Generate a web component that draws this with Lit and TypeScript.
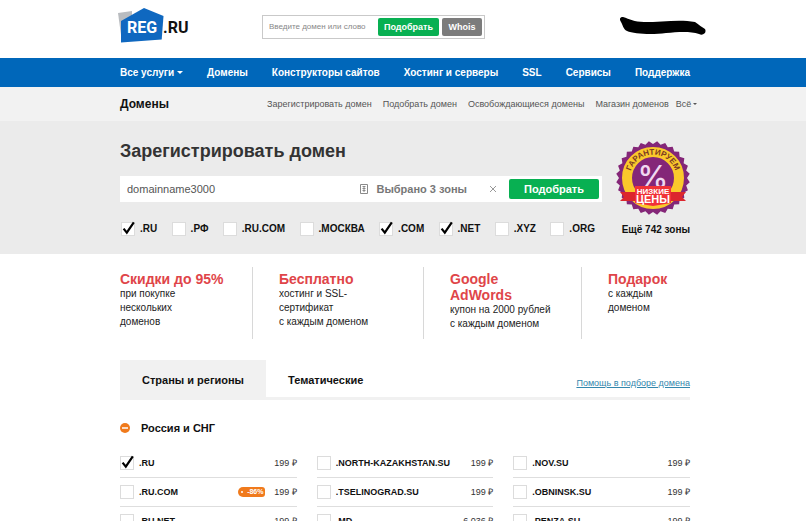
import { LitElement, html, css, svg, nothing } from "lit";
import { customElement, property } from "lit/decorators.js";

interface Zone {
  name: string;
  price?: string;
  sale?: string;
  checked?: boolean;
}

const MENU = ["Домены", "Конструкторы сайтов", "Хостинг и серверы", "SSL", "Сервисы", "Поддержка"];
const SUBMENU = ["Зарегистрировать домен", "Подобрать домен", "Освобождающиеся домены", "Магазин доменов"];
const QUICK: Zone[] = [
  { name: ".RU", checked: true },
  { name: ".РФ" },
  { name: ".RU.COM" },
  { name: ".МОСКВА" },
  { name: ".COM", checked: true },
  { name: ".NET", checked: true },
  { name: ".XYZ" },
  { name: ".ORG" },
];
const FEATURES = [
  { title: ["Скидки до 95%"], text: ["при покупке", "нескольких", "доменов"] },
  { title: ["Бесплатно"], text: ["хостинг и SSL-", "сертификат", "с каждым доменом"] },
  { title: ["Google", "AdWords"], text: ["купон на 2000 рублей", "с каждым доменом"] },
  { title: ["Подарок"], text: ["с каждым", "доменом"] },
];
const ZONES: Zone[] = [
  { name: ".RU", price: "199 ₽", checked: true },
  { name: ".NORTH-KAZAKHSTAN.SU", price: "199 ₽" },
  { name: ".NOV.SU", price: "199 ₽" },
  { name: ".RU.COM", price: "199 ₽", sale: "-86%" },
  { name: ".TSELINOGRAD.SU", price: "199 ₽" },
  { name: ".OBNINSK.SU", price: "199 ₽" },
  { name: ".RU.NET", price: "199 ₽" },
  { name: ".MD", price: "6 036 ₽" },
  { name: ".PENZA.SU", price: "199 ₽" },
];

const lines = (parts: string[]) => parts.map((p, i) => (i ? html`<br />${p}` : p));

@customElement("zone-check")
class ZoneCheck extends LitElement {
  @property() label = "";
  @property({ type: Boolean }) checked = false;

  static styles = css`
    :host { display: block; }
    .zone { display: flex; align-items: center; gap: 5px; font-weight: bold; color: #111; white-space: nowrap; }
    .box { display: grid; width: 14px; height: 14px; }
    .input { grid-area: 1 / 1; appearance: none; box-sizing: border-box; width: 14px; height: 14px; margin: 0; background: #fff; border: 1px solid #dcdcdc; }
    .tick { grid-area: 1 / 1; width: 14px; height: 14px; overflow: visible; pointer-events: none; visibility: hidden; }
    .input:checked + .tick { visibility: visible; }
  `;

  render() {
    return html`<label class="zone">
      <span class="box">
        <input class="input" type="checkbox" .checked=${this.checked} />
        <svg class="tick" viewBox="0 0 14 14" aria-hidden="true">
          <path d="M2.6 6.6 5.8 10.6 12.8.4" fill="none" stroke="#000" stroke-width="2.2" />
        </svg>
      </span>
      <span>${this.label}</span>
    </label>`;
  }
}

@customElement("price-seal")
class PriceSeal extends LitElement {
  static styles = css`
    :host { display: block; }
    .seal { display: block; width: 74px; height: 74px; }
    .arc { font: bold 8px "Liberation Sans", Arial, sans-serif; fill: #7a3a22; }
    .percent { font: 500 31px Inter, sans-serif; fill: #f0d8f0; }
    .small { font: bold 8px "Liberation Sans", Arial, sans-serif; fill: #fff; }
    .big { font: bold 11px "Liberation Sans", Arial, sans-serif; fill: #fff; }
  `;

  render() {
    const teeth = 28;
    const at = (r: number, a: number) => `${(37 + r * Math.sin(a)).toFixed(2)} ${(37 - r * Math.cos(a)).toFixed(2)}`;
    let edge = `M${at(34, 0)}`;
    for (let i = 0; i < teeth; i++) {
      const step = (2 * Math.PI) / teeth;
      edge += `L${at(37, (i + 0.5) * step)} ${at(34, (i + 1) * step)}`;
    }
    return html`<svg class="seal" viewBox="0 0 74 74" role="img" aria-label="Гарантируем низкие цены">
      <path d=${edge + "Z"} fill="#842678" />
      <circle cx="37" cy="37" r="26" fill="none" stroke="#fac92c" stroke-width="10" />
      ${svg`<path id="arc" d="M14.8 44 A23.3 23.3 0 1 1 59.2 44" fill="none" />
      <text class="arc" text-anchor="middle"><textPath href="#arc" startOffset="50%">ГАРАНТИРУЕМ</textPath></text>`}
      <text class="percent" x="37" y="47" text-anchor="middle">%</text>
      <path d="M4 51H20V60H4L8 56ZM54 51H70L66 56 70 60H54Z" fill="#dc262e" />
      <path d="M19 45H55V62L37 65 19 62Z" fill="#f13238" />
      <text class="small" x="37" y="53" text-anchor="middle">НИЗКИЕ</text>
      <text class="big" x="37" y="62" text-anchor="middle">ЦЕНЫ</text>
    </svg>`;
  }
}

@customElement("app-root")
class AppRoot extends LitElement {
  static styles = css`
    :host { display: block; padding-right: 1px; background: #fff; color: #222; font: 10px/14px "Liberation Sans", Arial, sans-serif; }
    .wrap { max-width: 570px; margin: 0 auto; padding-left: 4px; }
    .row { display: flex; align-items: center; }
    a { color: inherit; text-decoration: none; }
    button { padding: 0; border: 0; border-radius: 2px; color: #fff; font: inherit; font-weight: bold; cursor: pointer; }
    input { font: inherit; }

    .top { height: 58px; }
    .brand { flex: 0 0 142px; margin-top: -8px; }
    .logo { display: block; width: 72px; height: 36px; margin-left: -2px; }
    .reg { font: bold 16px Roboto, sans-serif; fill: #fff; }
    .ru { font: bold 16px Roboto, sans-serif; fill: #111; }
    .finder { box-sizing: border-box; width: 223px; height: 24px; padding: 2px; gap: 3px; border: 1px solid #c9c9c9; margin-top: -4px; font-size: 9px; }
    .query { flex: 1; min-width: 0; padding: 0 0 0 4px; border: 0; outline: 0; background: none; color: #555; font-size: 8px; }
    .query::placeholder { color: #888; opacity: 1; }
    .find { flex: 0 0 61px; height: 18px; background: #08b052; }
    .whois { flex: 0 0 40px; height: 18px; background: #7c7c7c; }
    .scribble { width: 86px; height: 20px; margin: -6px -16px 0 auto; }

    .menu { background: #0067ba; color: #fff; font-weight: bold; }
    .menu .wrap { display: flex; justify-content: space-between; align-items: center; height: 29px; }
    .caret { display: inline-block; margin-left: 3px; border: 3px solid transparent; border-top-color: currentColor; border-bottom: 0; vertical-align: 2px; }

    .sub { background: #f2f2f2; }
    .sub .wrap { display: flex; align-items: center; height: 34px; color: #555; font-size: 9px; white-space: nowrap; }
    .here { flex: 0 0 147px; margin: 0; color: #111; font-size: 12px; }
    .links { display: flex; gap: 11px; }
    .all { margin-left: 7px; }
    .all .caret { border-width: 2px; border-bottom: 0; margin-left: 2px; }

    .hero { background: #ebebeb; }
    .hero .wrap { display: grid; grid-template-columns: 1fr 74px; column-gap: 14px; height: 133px; }
    .title { margin: 0 0 13px; padding-top: 18px; color: #333; font-size: 18px; line-height: 24px; }
    .search { height: 26px; box-sizing: border-box; padding: 3px; background: #fff; font-size: 11px; }
    .name { flex: 1; min-width: 0; padding: 0 0 0 4px; border: 0; outline: 0; background: none; color: #555; }
    .list { width: 8px; height: 10px; margin-right: 8px; }
    .picked { color: #777; font-weight: bold; }
    .clear { width: 8px; height: 16px; margin: 0 12px 0 22px; background: none; display: flex; align-items: center; }
    .go { flex: 0 0 90px; height: 20px; background: #08b052; font-size: 11px; }
    .quick { display: flex; justify-content: space-between; margin: 20px 7px 0 1px; }
    .side { display: flex; flex-direction: column; justify-content: space-between; align-items: flex-end; padding: 20px 0 17px; }
    .more { color: #111; font-weight: bold; white-space: nowrap; }

    .features { display: grid; grid-template-columns: 133fr 171fr 158fr 108fr; padding-top: 13px; }
    .feature { min-height: 72px; box-sizing: border-box; padding: 4px 0 0 26px; border-right: 1px solid #d8d8d8; white-space: nowrap; }
    .feature:first-child { padding-left: 0; }
    .feature:last-child { border: 0; }
    .perk { margin: 0; color: #df4549; font-size: 14px; line-height: 16px; }
    .note { margin: 0; }

    .tabs { display: flex; height: 40px; box-sizing: border-box; margin-top: 21px; border-bottom: 3px solid #f1f1f1; font-size: 11px; }
    .tab { height: 38px; padding: 2px 22px 0; background: none; border-radius: 0; color: #111; }
    .tab.on { background: #f1f1f1; }
    .help { margin: 16px 0 0 auto; color: #3487ad; font-size: 9px; text-decoration: underline; }

    .group { display: flex; align-items: center; gap: 11px; margin: 20px 0 13px; color: #111; font-size: 11px; line-height: 16px; }
    .minus { width: 10px; height: 10px; }
    .zones { display: grid; grid-template-columns: repeat(3, 1fr); column-gap: 20px; font-size: 9px; }
    .entry { display: flex; align-items: center; height: 28px; border-bottom: 1px solid #dedede; }
    .price { color: #333; }
    .entry zone-check { margin-right: auto; }
    .sale { display: flex; align-items: center; gap: 4px; box-sizing: border-box; width: 27px; height: 10px; padding-left: 3px; margin-right: 9px; border-radius: 5px 3px 3px 5px; background: #f07a1c; color: #fff; font-size: 7px; font-weight: bold; }
    .sale::before { content: ""; width: 2px; height: 2px; border-radius: 1px; background: #fff; }
  `;

  render() {
    return html`
      <header class="wrap row top">
        <a class="brand" href="#">
          <svg class="logo" viewBox="0 0 72 36" role="img" aria-label="REG.RU">
            <path d="M0 6 14 4V28H3Z" fill="#b9bcc0" />
            <path d="M3 14 26 1 45.5 9 43.7 32.5 3 35.5Z" fill="#0f68c0" />
            <text class="reg" x="9" y="26">REG</text>
            <text class="ru" x="45" y="26">.RU</text>
          </svg>
        </a>
        <form class="row finder">
          <input class="query" type="text" aria-label="Домен" placeholder="Введите домен или слово" />
          <button class="find" type="button">Подобрать</button>
          <button class="whois" type="button">Whois</button>
        </form>
        <svg class="scribble" viewBox="0 0 86 20" aria-hidden="true">
          <path d="M3 1C10 3 14 6 24 6C42 6 60 3 75 6C79 9 82 11 85 13C87 17 83 20 79 18C70 15 58 16 46 17C32 19 14 18 7 15C3 13 3 9 1 6C-1 3 0 1 3 1Z" fill="#000" />
        </svg>
      </header>

      <nav class="menu">
        <div class="wrap">
          <a href="#">Все услуги<span class="caret"></span></a>
          ${MENU.map((m) => html`<a href="#">${m}</a>`)}
        </div>
      </nav>

      <div class="sub">
        <div class="wrap">
          <h2 class="here">Домены</h2>
          <div class="links">${SUBMENU.map((m) => html`<a href="#">${m}</a>`)}</div>
          <a class="all" href="#">Всё<span class="caret"></span></a>
        </div>
      </div>

      <section class="hero">
        <div class="wrap">
          <div>
            <h1 class="title">Зарегистрировать домен</h1>
            <form class="row search">
              <input class="name" type="text" aria-label="Имя домена" .value=${"domainname3000"} />
              <svg class="list" viewBox="0 0 8 10" aria-hidden="true">
                <path d="M.5.5H7.5V9.5H.5ZM2.5 2.5H5.5M2.5 4.5H5.5M2.5 6.5H5.5M4 2V8" fill="none" stroke="#8a8a8a" />
              </svg>
              <span class="picked">Выбрано 3 зоны</span>
              <button class="clear" type="button" aria-label="Очистить">
                <svg width="8" height="8" viewBox="0 0 8 8"><path d="M1 1 7 7M7 1 1 7" stroke="#999" /></svg>
              </button>
              <button class="go" type="button">Подобрать</button>
            </form>
            <div class="quick">
              ${QUICK.map((z) => html`<zone-check label=${z.name} ?checked=${z.checked}></zone-check>`)}
            </div>
          </div>
          <div class="side">
            <price-seal></price-seal>
            <a class="more" href="#">Ещё 742 зоны</a>
          </div>
        </div>
      </section>

      <main class="wrap">
        <section class="features">
          ${FEATURES.map(
            (f) => html`<div class="feature">
              <h3 class="perk">${lines(f.title)}</h3>
              <p class="note">${lines(f.text)}</p>
            </div>`
          )}
        </section>

        <div class="tabs">
          <button class="tab on" type="button">Страны и регионы</button>
          <button class="tab" type="button">Тематические</button>
          <a class="help" href="#">Помощь в подборе домена</a>
        </div>

        <h2 class="group">
          <svg class="minus" viewBox="0 0 10 10" aria-hidden="true">
            <circle cx="5" cy="5" r="5" fill="#f07a1c" />
            <path d="M2 5H8" stroke="#fff" stroke-width="1.5" />
          </svg>
          Россия и СНГ
        </h2>
        <div class="zones">
          ${ZONES.map(
            (z) => html`<div class="entry">
              <zone-check label=${z.name} ?checked=${z.checked}></zone-check>
              ${z.sale ? html`<span class="sale">${z.sale}</span>` : nothing}
              <span class="price">${z.price}</span>
            </div>`
          )}
        </div>
      </main>
    `;
  }
}
